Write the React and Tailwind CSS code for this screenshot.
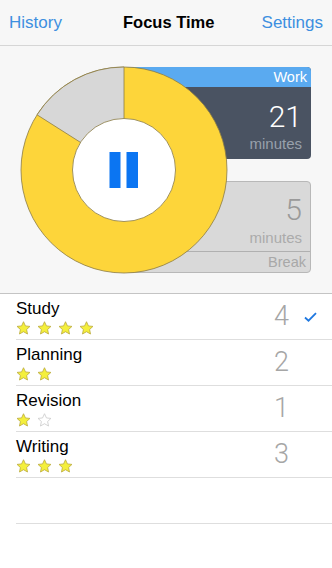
import React from "react";

const tasks = [
  { name: "Study", stars: 4, total: 4, count: 4, checked: true },
  { name: "Planning", stars: 2, total: 2, count: 2 },
  { name: "Revision", stars: 1, total: 2, count: 1 },
  { name: "Writing", stars: 3, total: 3, count: 3 },
];

function Star({ filled }) {
  return (
    <svg width="15" height="14" viewBox="0 0 24 23">
      <path
        d="M12 1.2l3.2 6.9 7.4.8-5.5 5.1 1.5 7.4L12 17.6l-6.6 3.8 1.5-7.4L1.4 8.9l7.4-.8z"
        fill={filled ? "#f4ef3c" : "#ffffff"}
        stroke={filled ? "#b9a93a" : "#c8c8c8"}
        strokeWidth="1.3"
        strokeLinejoin="round"
      />
    </svg>
  );
}

// donut: 21 of 25 minutes done
function Donut() {
  const c = 104;
  const R = 103;
  const a = (57.6 * Math.PI) / 180;
  const x = c - R * Math.sin(a);
  const y = c - R * Math.cos(a);
  return (
    <svg width="208" height="208" viewBox="0 0 208 208">
      <circle cx={c} cy={c} r={R} fill="#fdd53a" stroke="#8a7b45" strokeWidth="0.8" />
      <path
        d={`M${c} ${c} L${c} ${c - R} A${R} ${R} 0 0 0 ${x} ${y} Z`}
        fill="#d7d7d7"
        stroke="#8a7b45"
        strokeWidth="0.8"
      />
      <circle cx={c} cy={c} r="51.5" fill="#ffffff" stroke="#8a7b45" strokeWidth="0.8" />
      <rect x="89.5" y="86" width="11" height="36" fill="#0b75f2" />
      <rect x="106.5" y="86" width="11.5" height="36" fill="#0b75f2" />
    </svg>
  );
}

export default function App() {
  return (
    <div
      className="w-[332px] h-[568px] bg-white overflow-hidden"
      style={{ fontFamily: '"Liberation Sans", Arial, sans-serif' }}
    >
      {/* Nav bar */}
      <div className="h-[46px] bg-[#f7f7f7] border-b border-[#d6d6d6] flex items-center justify-between px-[9px] text-[17px]">
        <span className="text-[#3d8fe0]">History</span>
        <span className="font-bold text-black text-[16.5px] ml-[14px]">Focus Time</span>
        <span className="text-[#3d8fe0]">Settings</span>
      </div>

      {/* Timer panel */}
      <div className="relative h-[248px] bg-[#f7f7f7] border-b border-[#c4c4c4] pt-[21px] pr-[21px] flex flex-col items-end gap-[22px]">
        <div className="w-[186px] h-[92px] rounded-[4px] bg-[#4a5362] overflow-hidden flex flex-col">
          <div className="h-[20px] bg-[#5aaaf0] text-white text-[14.5px] leading-[20px] text-right pr-[4px]">
            Work
          </div>
          <div className="flex-1 flex flex-col items-end pr-[9px]">
            <span
              className="text-white text-[30px] leading-none mt-[15px] font-light"
              style={{ fontFamily: "Roboto, sans-serif" }}
            >
              21
            </span>
            <span className="text-[#98a0ab] text-[15px] leading-none mt-[4px]">minutes</span>
          </div>
        </div>
        <div className="w-[186px] h-[92px] rounded-[4px] bg-[#d9d9d9] border border-[#b8b8b8] flex flex-col">
          <div className="flex-1 flex flex-col items-end pr-[8px]">
            <span
              className="text-[#9a9a9a] text-[30px] leading-none mt-[13px] font-light"
              style={{ fontFamily: "Roboto, sans-serif" }}
            >
              5
            </span>
            <span className="text-[#ababab] text-[15px] leading-none mt-[5px]">minutes</span>
          </div>
          <div className="h-[21px] border-t border-[#b0b0b0] text-[#a8a8a8] text-[14.5px] leading-[20px] text-right pr-[4px]">
            Break
          </div>
        </div>
        <div className="absolute left-[20px] top-[20px]">
          <Donut />
        </div>
      </div>

      {/* Task list */}
      <div className="pl-[16px]">
        {tasks.map((t) => (
          <div key={t.name} className="h-[46px] border-b border-[#dedede] flex items-center">
            <div className="flex-1 flex flex-col pt-[1px]">
              <span className="text-[17px] leading-[20px] text-black">{t.name}</span>
              <div className="flex gap-[6px] mt-[2px]">
                {Array.from({ length: t.total }).map((_, i) => (
                  <Star key={i} filled={i < t.stars} />
                ))}
              </div>
            </div>
            <span
              className="text-[27px] font-light text-[#a6a6a6] w-[20px] text-right"
              style={{ fontFamily: "Roboto, sans-serif" }}
            >
              {t.count}
            </span>
            <div className="w-[43px] flex justify-center">
              {t.checked && (
                <svg width="13" height="10" viewBox="0 0 13 10">
                  <path d="M1 5.5l3.5 3.2L12 1.2" fill="none" stroke="#1f78e0" strokeWidth="1.8" />
                </svg>
              )}
            </div>
          </div>
        ))}
        <div className="h-[46px] border-b border-[#dedede]" />
      </div>
    </div>
  );
}
